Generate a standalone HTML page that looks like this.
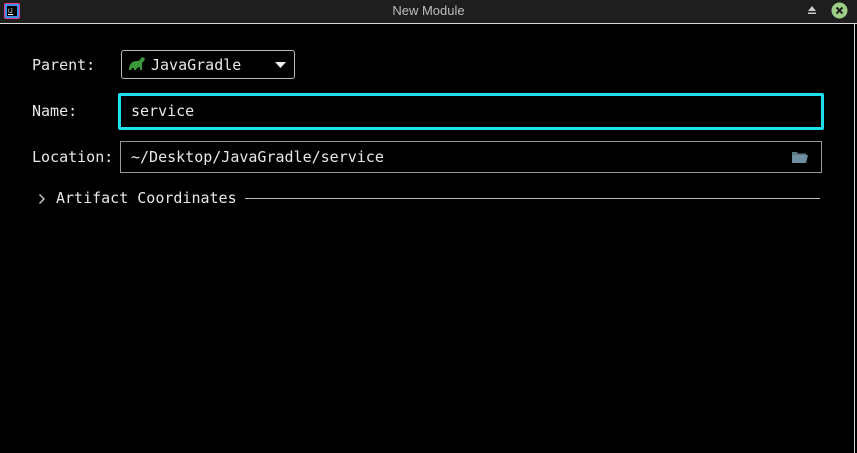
<!DOCTYPE html>
<html><head><style>
body{margin:0;width:857px;height:453px;background:#000;position:relative;overflow:hidden;font-family:"DejaVu Sans Mono","Liberation Mono",monospace;font-size:15px;color:#e8e8e8}
.tb{position:absolute;left:0;top:0;width:857px;height:23px;background:#1e1e1e;border-bottom:1px solid #d8d8d8}
.title{position:absolute;left:0;width:857px;top:3px;text-align:center;font-family:"Liberation Sans",sans-serif;font-size:13px;color:#bdbdbd}
.rb{position:absolute;left:854px;top:23px;width:1px;height:430px;background:#d0d0d0}
.lbl{position:absolute;left:32px}
.box{position:absolute;box-sizing:border-box}
</style></head><body>
<div class="tb">
<svg style="position:absolute;left:4px;top:3px" width="16" height="16"><rect x="0" y="0" width="16" height="16" rx="2" fill="#e83e8c"/><rect x="1" y="1" width="14" height="14" fill="#3d8fe8"/><rect x="3" y="3" width="10" height="10" fill="#000"/><text x="4" y="10" font-size="6" fill="#fff" font-family="Liberation Sans">IJ</text><rect x="4" y="11" width="5" height="1" fill="#fff"/></svg>
<div class="title">New Module</div>
<svg style="position:absolute;left:806px;top:5px" width="12" height="10"><path d="M2 6 L6 1 L10 6Z" fill="#ccc"/><rect x="2" y="7.5" width="8" height="1.5" fill="#ccc"/></svg>
<svg style="position:absolute;left:830px;top:1px" width="20" height="20"><circle cx="9.5" cy="9.5" r="8" fill="#9ecf88"/><path d="M6.5 6.5L12.5 12.5M12.5 6.5L6.5 12.5" stroke="#1e1e1e" stroke-width="2"/></svg>
</div>
<div class="rb"></div>
<div class="lbl" style="top:56px">Parent:</div>
<div class="box" style="left:121px;top:50px;width:174px;height:29px;border:1px solid #bbb;border-radius:3px"></div>
<svg style="position:absolute;left:128px;top:56px" width="18" height="16"><path d="M1 14 C1 8 4 5 9 5 C11 5 12 4 13 2 C14 1 16 1 17 3 L16 5 C15 6 14 6 14 8 L14 14 L12 14 L12 11 L9 12 L8 14 L6 14 L6 12 L4 12 L3 14Z" fill="#3a9a3a"/></svg>
<div style="position:absolute;left:151px;top:56px">JavaGradle</div>
<svg style="position:absolute;left:275px;top:62px" width="12" height="8"><path d="M0 0 L11 0 L5.5 6Z" fill="#eee"/></svg>
<div class="lbl" style="top:102px">Name:</div>
<div class="box" style="left:118px;top:93px;width:706px;height:37px;border:3px solid #1ee0f0;border-radius:2px"></div>
<div style="position:absolute;left:131px;top:102px">service</div>
<div class="lbl" style="top:148px">Location:</div>
<div class="box" style="left:120px;top:141px;width:702px;height:32px;border:1px solid #999"></div>
<div style="position:absolute;left:131px;top:148px">~/Desktop/JavaGradle/service</div>
<svg style="position:absolute;left:791px;top:150px" width="18" height="14"><path d="M1 2 L6 2 L7 3.5 L15 3.5 L15 5 L1 5Z" fill="#5a7a8a"/><path d="M1 5 L17 5 L15 13 L1 13Z" fill="#6f8fa0"/></svg>
<svg style="position:absolute;left:38px;top:193px" width="8" height="12"><path d="M1.5 1.5 L6 6 L1.5 10.5" stroke="#ccc" stroke-width="1.4" fill="none"/></svg>
<div style="position:absolute;left:56px;top:189px">Artifact Coordinates</div>
<div style="position:absolute;left:245px;top:198px;width:575px;height:1px;background:#bbb"></div>
</body></html>
